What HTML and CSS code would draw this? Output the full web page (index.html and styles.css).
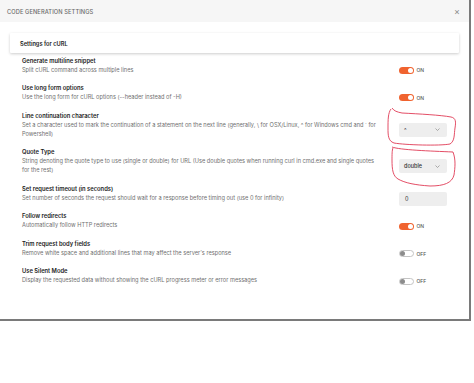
FILE: index.html
```html
<!DOCTYPE html>
<html lang="en">
<head>
  <meta charset="UTF-8" />
  <title>Code Generation Settings</title>
  <meta name="viewport" content="width=device-width, initial-scale=1.0" />
  <link rel="stylesheet" href="styles.css">
</head>
<body>
  <div class="modal">
    <div class="modal-header">
      <span class="modal-title">CODE GENERATION SETTINGS</span>
      <span class="close">&times;</span>
    </div>

    <div class="modal-body">
      <div class="section-head">Settings for cURL</div>

      <div class="settings">
        <div class="setting">
          <div class="setting-title">Generate multiline snippet</div>
          <div class="setting-row">
            <div class="setting-desc">Split cURL command across multiple lines</div>
            <div class="setting-control"><span class="toggle on"></span><span class="toggle-label">ON</span></div>
          </div>
        </div>

        <div class="setting">
          <div class="setting-title">Use long form options</div>
          <div class="setting-row">
            <div class="setting-desc">Use the long form for cURL options (--header instead of -H)</div>
            <div class="setting-control"><span class="toggle on"></span><span class="toggle-label">ON</span></div>
          </div>
        </div>

        <div class="setting">
          <div class="setting-title">Line continuation character</div>
          <div class="setting-row">
            <div class="setting-desc">Set a character used to mark the continuation of a statement on the next line (generally, \ for OSX/Linux, ^ for Windows cmd and ` for Powershell)</div>
            <div class="setting-control">
              <div class="select"><span>^</span><svg class="chevron" width="5" height="3" viewBox="0 0 5 3"><polyline points="0.5,0.5 2.5,2.5 4.5,0.5" /></svg></div>
            </div>
          </div>
        </div>

        <div class="setting">
          <div class="setting-title">Quote Type</div>
          <div class="setting-row">
            <div class="setting-desc">String denoting the quote type to use (single or double) for URL (Use double quotes when running curl in cmd.exe and single quotes<br>for the rest)</div>
            <div class="setting-control">
              <div class="select"><span class="select-value">double</span><svg class="chevron" width="5" height="3" viewBox="0 0 5 3"><polyline points="0.5,0.5 2.5,2.5 4.5,0.5" /></svg></div>
            </div>
          </div>
        </div>

        <div class="setting">
          <div class="setting-title">Set request timeout (in seconds)</div>
          <div class="setting-row">
            <div class="setting-desc">Set number of seconds the request should wait for a response before timing out (use 0 for infinity)</div>
            <div class="setting-control"><div class="number-input">0</div></div>
          </div>
        </div>

        <div class="setting">
          <div class="setting-title">Follow redirects</div>
          <div class="setting-row">
            <div class="setting-desc">Automatically follow HTTP redirects</div>
            <div class="setting-control"><span class="toggle on"></span><span class="toggle-label">ON</span></div>
          </div>
        </div>

        <div class="setting">
          <div class="setting-title">Trim request body fields</div>
          <div class="setting-row">
            <div class="setting-desc">Remove white space and additional lines that may affect the server's response</div>
            <div class="setting-control"><span class="toggle off"></span><span class="toggle-label">OFF</span></div>
          </div>
        </div>

        <div class="setting">
          <div class="setting-title">Use Silent Mode</div>
          <div class="setting-row">
            <div class="setting-desc">Display the requested data without showing the cURL progress meter or error messages</div>
            <div class="setting-control"><span class="toggle off"></span><span class="toggle-label">OFF</span></div>
          </div>
        </div>
      </div>
    </div>
  </div>

  <!-- hand-drawn red marks over the two dropdowns -->
  <svg class="marks" width="474" height="383" viewBox="0 0 474 383">
    <path d="M392,108 C394,111 397,112 402,113 C420,114 440,115 451,117 C456,118 456,122 455,128 C454,134 455,141 450,144 C440,146 405,145 394,143 C388,141 388,135 388,128 C388,120 388,113 391,109" />
    <path d="M392,147 C400,150 430,151 453,152 C456,160 455,168 454,175 C452,183 444,186 430,186 C415,185 405,183 398,179 C393,176 392,170 392,160 C392,155 392,150 393,148" />
  </svg>
</body>
</html>
```

FILE: styles.css
```css
body {
  margin: 0;
  background: #fff;
  font-family: Inter, "Liberation Sans", sans-serif;
  color: #222;
}
.modal {
  width: 469px;
  height: 319px;
  background: #fff;
  border-right: 2px solid #7a7a7a;
  border-bottom: 2px solid #7a7a7a;
}
.modal-header {
  height: 22px;
  background: #f6f6f6;
  display: flex;
  align-items: center;
  justify-content: space-between;
  padding: 0 9px 0 7px;
}
.modal-title {
  font-size: 5.7px;
  font-weight: 500;
  color: #6b6b6b;
  letter-spacing: 0.1px;
}
.close {
  font-size: 9px;
  color: #8a8a8a;
}
.modal-body {
  padding: 11px 10px 0 10px;
}
.section-head {
  height: 20px;
  display: flex;
  align-items: center;
  padding-left: 10px;
  font-size: 5.7px;
  font-weight: 600;
  color: #222;
  box-shadow: 0 1px 3px rgba(0,0,0,0.2);
  border-radius: 1px;
}
.settings {
  padding: 1.5px 0 0 12px;
}
.setting {
  margin-bottom: 7.3px;
}
.setting-title {
  font-size: 5.8px;
  font-weight: 600;
  line-height: 11px;
  color: #222;
}
.setting-row {
  display: flex;
  align-items: center;
}
.setting-desc {
  flex: 1;
  font-size: 5.65px;
  line-height: 9.2px;
  color: #707070;
  padding-right: 13px;
}
.setting-control {
  width: 60px;
  height: 9px;
  flex-shrink: 0;
  display: flex;
  align-items: center;
}
.toggle {
  width: 15px;
  height: 7px;
  box-sizing: border-box;
  border-radius: 4px;
  display: flex;
  align-items: center;
  padding: 0 1px;
}
.toggle::after {
  content: "";
  width: 5px;
  height: 5px;
  border-radius: 50%;
  background: #fff;
}
.toggle.on {
  background: #f0632f;
  justify-content: flex-end;
}
.toggle.off {
  background: #fff;
  border: 1px solid #c4c4c4;
  padding: 0;
}
.toggle.off::after {
  background: #8c8c8c;
}
.toggle-label {
  margin-left: 2.5px;
  font-size: 5px;
  font-weight: 500;
  color: #555;
}
.select,
.number-input {
  width: 48px;
  height: 14px;
  flex-shrink: 0;
  box-sizing: border-box;
  background: #eeeeee;
  border-radius: 2px;
  display: flex;
  align-items: center;
  justify-content: space-between;
  padding: 0 7px 0 5px;
  font-size: 5.5px;
  color: #333;
}
.select-value {
  font-weight: 500;
}
.number-input {
  padding-left: 6px;
}
.chevron {
  fill: none;
  stroke: #8a8a8a;
  stroke-width: 0.7;
}
.marks {
  position: absolute;
  top: 0;
  left: 0;
  pointer-events: none;
}
.marks path {
  fill: none;
  stroke: #e03a55;
  stroke-width: 0.9;
}
```
